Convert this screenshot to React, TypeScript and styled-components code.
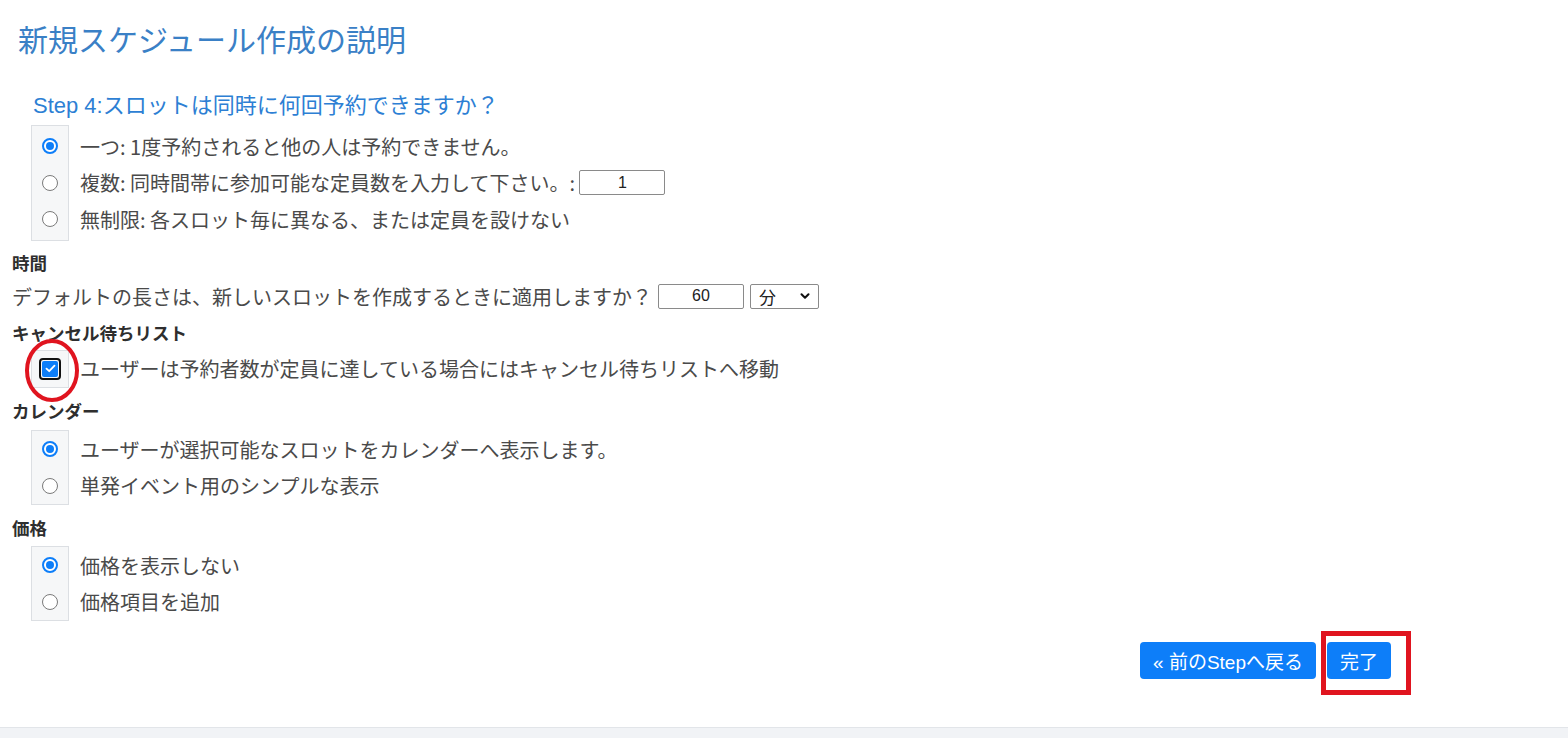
import React from "react";
import styled, { createGlobalStyle } from "styled-components";
import { ChevronDown } from "lucide-react";

const GlobalStyle = createGlobalStyle`
  html, body {
    margin: 0;
    padding: 0;
    background: #ffffff;
  }
  body {
    font-family: "Noto Sans CJK JP", "Liberation Sans", sans-serif;
    color: #444;
  }
`;

const colors = {
  text: "#4a4a4a",
  label: "#2e2e2e",
  title: "#3a80c6",
  step: "#2d7fd4",
  addonBg: "#f6f7f8",
  addonBorder: "#dcdfe3",
  blue: "#0d7ef9",
  red: "#e0141f",
};

const Page = styled.div`
  display: flex;
  flex-direction: column;
  min-height: 738px;
`;

const Content = styled.div`
  padding-left: 12px;
`;

const Title = styled.h1`
  margin: 20px 0 0 6px;
  font-size: 30px;
  line-height: 36px;
  font-weight: 400;
  color: ${colors.title};
`;

const StepHeading = styled.h2`
  margin: 36px 0 0 21px;
  font-family: "Liberation Sans", "Noto Sans CJK JP", sans-serif;
  font-size: 22px;
  line-height: 28px;
  font-weight: 400;
  color: ${colors.step};
`;

const Group = styled.div<{ $top: number }>`
  display: flex;
  margin: ${({ $top }) => $top}px 0 0 19px;
`;

const Addon = styled.div<{ $pad?: number }>`
  display: flex;
  flex-direction: column;
  width: 36px;
  padding: ${({ $pad }) => $pad ?? 0}px 0;
  background: ${colors.addonBg};
  border: 1px solid ${colors.addonBorder};
  position: relative;
`;

const AddonCell = styled.div`
  height: 36.5px;
  display: flex;
  align-items: center;
  justify-content: center;
`;

const Labels = styled.div<{ $pad?: number }>`
  display: flex;
  flex-direction: column;
  padding: ${({ $pad }) => ($pad ?? 0) + 1}px 0;
  margin-left: 11px;
`;

const OptionText = styled.div`
  height: 36.5px;
  display: flex;
  align-items: center;
  font-size: 20px;
  color: ${colors.text};
  white-space: nowrap;
`;

const Radio = styled.span<{ $checked?: boolean }>`
  box-sizing: border-box;
  width: 16px;
  height: 16px;
  border-radius: 50%;
  border: ${({ $checked }) =>
    $checked ? `2px solid ${colors.blue}` : "1px solid #7a7a7a"};
  background: #fff;
  display: flex;
  align-items: center;
  justify-content: center;

  &::after {
    content: "";
    display: ${({ $checked }) => ($checked ? "block" : "none")};
    width: 8px;
    height: 8px;
    border-radius: 50%;
    background: ${colors.blue};
  }
`;

const Checkbox = styled.span`
  box-sizing: border-box;
  width: 22px;
  height: 22px;
  border-radius: 4px;
  border: 2px solid #111;
  padding: 1px;
  display: flex;

  & > span {
    flex: 1;
    border-radius: 2px;
    background: ${colors.blue};
    display: flex;
    align-items: center;
    justify-content: center;
  }
`;

const Ellipse = styled.svg`
  position: absolute;
  left: -8px;
  top: -12px;
  width: 56px;
  height: 63px;
  overflow: visible;
  pointer-events: none;
`;

const SmallInput = styled.span`
  box-sizing: border-box;
  display: inline-flex;
  align-items: center;
  justify-content: center;
  width: 86px;
  height: 25px;
  border: 1px solid #8a8a8a;
  border-radius: 2px;
  font-family: "Liberation Sans", sans-serif;
  font-size: 16px;
  color: #222;
  background: #fff;
`;

const SectionLabel = styled.div<{ $top: number }>`
  margin-top: ${({ $top }) => $top}px;
  font-size: 17.5px;
  line-height: 24px;
  font-weight: 700;
  color: ${colors.label};
`;

const DurationRow = styled.div`
  margin-top: 9px;
  height: 25px;
  display: flex;
  align-items: center;
  gap: 6px;
  font-size: 20px;
  color: ${colors.text};
  white-space: nowrap;
`;

const Select = styled.span`
  box-sizing: border-box;
  display: inline-flex;
  align-items: center;
  justify-content: space-between;
  width: 69px;
  height: 25px;
  padding: 0 6px 0 8px;
  border: 1px solid #8a8a8a;
  border-radius: 2px;
  font-size: 17px;
  color: #222;
  background: #fff;
`;

const Actions = styled.div`
  display: flex;
  justify-content: flex-end;
  gap: 11px;
  margin-top: 21px;
  padding-right: 177px;
`;

const Button = styled.button`
  position: relative;
  height: 37px;
  padding: 0 13px;
  border: none;
  border-radius: 4px;
  background: ${colors.blue};
  color: #fff;
  font-family: "Liberation Sans", "Noto Sans CJK JP", sans-serif;
  font-size: 19px;
  cursor: pointer;
`;

const Highlight = styled.span`
  position: absolute;
  left: -6px;
  top: -11px;
  right: -20px;
  bottom: -16px;
  border: 5px solid ${colors.red};
  pointer-events: none;
`;

const Footer = styled.div`
  margin-top: auto;
  height: 10px;
  background: #f1f3f6;
  border-top: 1px solid #e2e5e9;
`;

type Option = { label: React.ReactNode; checked?: boolean };

const RadioGroup: React.FC<{ options: Option[]; top: number; pad?: number }> = ({
  options,
  top,
  pad,
}) => (
  <Group $top={top}>
    <Addon $pad={pad}>
      {options.map((o, i) => (
        <AddonCell key={i}>
          <Radio $checked={o.checked} />
        </AddonCell>
      ))}
    </Addon>
    <Labels $pad={pad}>
      {options.map((o, i) => (
        <OptionText key={i}>{o.label}</OptionText>
      ))}
    </Labels>
  </Group>
);

const App: React.FC = () => {
  return (
    <Page>
      <GlobalStyle />
      <Content>
        <Title>新規スケジュール作成の説明</Title>
        <StepHeading>Step 4:スロットは同時に何回予約できますか？</StepHeading>

        <RadioGroup
          top={5}
          pad={2}
          options={[
            { label: "一つ: 1度予約されると他の人は予約できません。", checked: true },
            {
              label: (
                <>
                  複数: 同時間帯に参加可能な定員数を入力して下さい。:&nbsp;
                  <SmallInput>1</SmallInput>
                </>
              ),
            },
            { label: "無制限: 各スロット毎に異なる、または定員を設けない" },
          ]}
        />

        <SectionLabel $top={10}>時間</SectionLabel>
        <DurationRow>
          デフォルトの長さは、新しいスロットを作成するときに適用しますか？
          <SmallInput>60</SmallInput>
          <Select>
            分
            <ChevronDown size={14} strokeWidth={3.5} color="#111" />
          </Select>
        </DurationRow>

        <SectionLabel $top={12}>キャンセル待ちリスト</SectionLabel>
        <Group $top={5}>
          <Addon>
            <AddonCell>
              <Checkbox>
                <span>
                  <svg width="11" height="9" viewBox="0 0 11 9">
                    <path
                      d="M1.5 4.6 L4.2 7.2 L9.5 1.6"
                      fill="none"
                      stroke="#fff"
                      strokeWidth="1.8"
                      strokeLinecap="round"
                      strokeLinejoin="round"
                    />
                  </svg>
                </span>
              </Checkbox>
            </AddonCell>
            <Ellipse viewBox="0 0 56 63">
              <ellipse
                cx="28"
                cy="31.5"
                rx="25"
                ry="29.5"
                fill="none"
                stroke={colors.red}
                strokeWidth="4"
              />
            </Ellipse>
          </Addon>
          <Labels>
            <OptionText>
              ユーザーは予約者数が定員に達している場合にはキャンセル待ちリストへ移動
            </OptionText>
          </Labels>
        </Group>

        <SectionLabel $top={11}>カレンダー</SectionLabel>
        <RadioGroup
          top={7}
          options={[
            { label: "ユーザーが選択可能なスロットをカレンダーへ表示します。", checked: true },
            { label: "単発イベント用のシンプルな表示" },
          ]}
        />

        <SectionLabel $top={11}>価格</SectionLabel>
        <RadioGroup
          top={6}
          options={[
            { label: "価格を表示しない", checked: true },
            { label: "価格項目を追加" },
          ]}
        />

        <Actions>
          <Button>« 前のStepへ戻る</Button>
          <Button>
            完了
            <Highlight />
          </Button>
        </Actions>
      </Content>
      <Footer />
    </Page>
  );
};

export default App;
